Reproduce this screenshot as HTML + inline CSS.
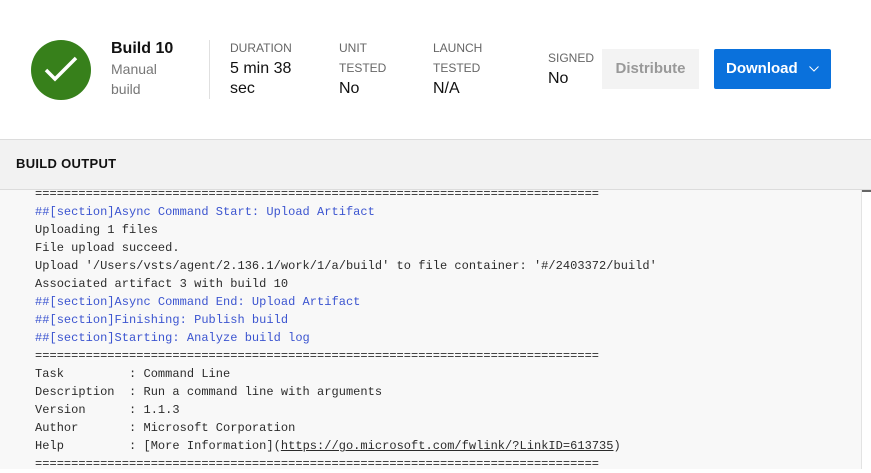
<!DOCTYPE html>
<html><head><style>
*{margin:0;padding:0;box-sizing:border-box}
body{width:871px;height:469px;overflow:hidden;background:#fff;font-family:"Liberation Sans",sans-serif;position:relative}
.a{position:absolute}
.lbl{font-size:12px;color:#666;line-height:20px}
.val{font-size:16px;color:#111;line-height:20px}
pre{font-family:"Liberation Mono",monospace;font-size:12px;line-height:18px;color:#2b2b2b;letter-spacing:0.03px}
.b{color:#3c55d0}
</style></head><body>
<div class="a" style="left:31px;top:40px;width:60px;height:60px;border-radius:50%;background:#37801b"></div>
<svg class="a" style="left:31px;top:40px" width="60" height="60"><path d="M15 30 L24 39 L45 18" fill="none" stroke="#fff" stroke-width="3.5"/></svg>
<div class="a" style="left:111px;top:39px;font-size:16px;font-weight:bold;color:#111;line-height:20px">Build 10</div>
<div class="a" style="left:111px;top:59px;font-size:14px;color:#777;line-height:20px">Manual<br>build</div>
<div class="a" style="left:209px;top:40px;width:1px;height:59px;background:#e0e0e0"></div>
<div class="a lbl" style="left:230px;top:38px">DURATION</div>
<div class="a val" style="left:230px;top:59px">5 min 38<br>sec</div>
<div class="a lbl" style="left:339px;top:38px">UNIT<br>TESTED</div>
<div class="a val" style="left:339px;top:79px">No</div>
<div class="a lbl" style="left:433px;top:38px">LAUNCH<br>TESTED</div>
<div class="a val" style="left:433px;top:79px">N/A</div>
<div class="a lbl" style="left:548px;top:48px">SIGNED</div>
<div class="a val" style="left:548px;top:69px">No</div>
<div class="a" style="left:602px;top:49px;width:97px;height:40px;background:#f3f3f3;color:#999;font-size:15px;font-weight:bold;text-align:center;line-height:40px">Distribute</div>
<div class="a" style="left:714px;top:49px;width:117px;height:40px;background:#0a71dc;border-radius:2px;color:#fff;font-size:15px;font-weight:bold;line-height:40px;padding-left:12px">Download</div>
<svg class="a" style="left:809px;top:66px" width="10" height="6"><path d="M0.5 0.5 L5 5 L9.5 0.5" fill="none" stroke="#fff" stroke-width="1"/></svg>
<div class="a" style="left:0;top:139px;width:871px;height:51px;background:#f2f2f2;border-top:1px solid #dcdcdc;border-bottom:1px solid #dcdcdc"></div>
<div class="a" style="left:16px;top:156px;font-size:13px;font-weight:bold;color:#111;letter-spacing:.3px">BUILD OUTPUT</div>
<div class="a" style="left:0;top:190px;width:861px;height:279px;background:#f8f8f8"></div>
<div class="a" style="left:861px;top:190px;width:10px;height:279px;background:#fff;border-left:1px solid #e3e3e3"></div>
<div class="a" style="left:862px;top:190px;width:9px;height:2px;background:#666"></div>
<pre class="a" style="left:35px;top:185px">==============================================================================
<span class="b">##[section]Async Command Start: Upload Artifact</span>
Uploading 1 files
File upload succeed.
Upload '/Users/vsts/agent/2.136.1/work/1/a/build' to file container: '#/2403372/build'
Associated artifact 3 with build 10
<span class="b">##[section]Async Command End: Upload Artifact</span>
<span class="b">##[section]Finishing: Publish build</span>
<span class="b">##[section]Starting: Analyze build log</span>
==============================================================================
Task         : Command Line
Description  : Run a command line with arguments
Version      : 1.1.3
Author       : Microsoft Corporation
Help         : [More Information](<u>https://go.microsoft.com/fwlink/?LinkID=613735</u>)
==============================================================================</pre>
</body></html>
